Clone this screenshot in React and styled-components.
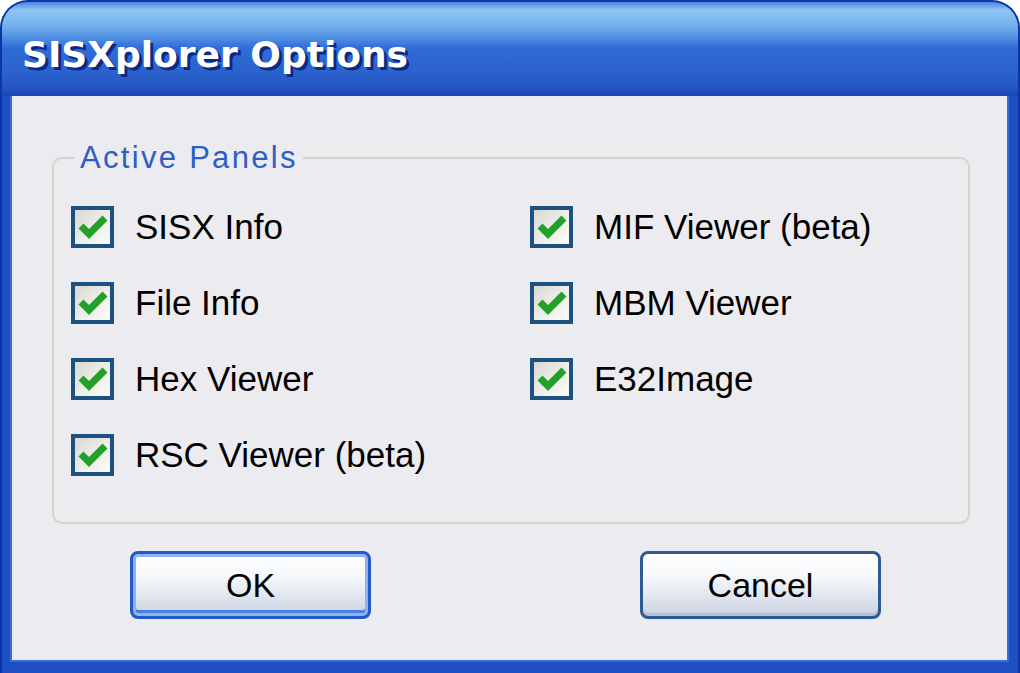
import React from "react";
import styled, { createGlobalStyle } from "styled-components";

const GlobalStyle = createGlobalStyle`
  html, body {
    margin: 0;
    padding: 0;
    background: #ffffff;
  }
  body {
    font-family: "Liberation Sans", Arial, sans-serif;
  }
`;

const panels = [
  { label: "SISX Info", checked: true },
  { label: "File Info", checked: true },
  { label: "Hex Viewer", checked: true },
  { label: "RSC Viewer (beta)", checked: true },
  { label: "MIF Viewer (beta)", checked: true },
  { label: "MBM Viewer", checked: true },
  { label: "E32Image", checked: true },
];

const Check = () => (
  <svg width="30" height="26" viewBox="0 0 30 26">
    <path
      d="M3 12 L11 20 L27 4"
      fill="none"
      stroke="#22a02a"
      strokeWidth="7"
      strokeLinejoin="miter"
      strokeLinecap="butt"
    />
  </svg>
);

export default function App() {
  return (
    <>
      <GlobalStyle />
      <Window>
        <TitleBar>
          <Title>SISXplorer Options</Title>
        </TitleBar>
        <Body>
          <GroupBox>
            <Legend>Active Panels</Legend>
            <CheckGrid>
              {panels.map((p) => (
                <CheckRow key={p.label}>
                  <Box>{p.checked && <Check />}</Box>
                  <Label>{p.label}</Label>
                </CheckRow>
              ))}
            </CheckGrid>
          </GroupBox>
          <Buttons>
            <Button $default>OK</Button>
            <Button>Cancel</Button>
          </Buttons>
        </Body>
      </Window>
    </>
  );
}

const Window = styled.div`
  width: 1020px;
  height: 673px;
  display: flex;
  flex-direction: column;
  background: #1f4fc4;
  border-radius: 28px 28px 0 0;
  overflow: hidden;
  box-sizing: border-box;
  border: 2px solid #0c35a8;
  border-bottom: none;
`;

const TitleBar = styled.div`
  height: 94px;
  flex: none;
  display: flex;
  align-items: center;
  padding-left: 20px;
  background: linear-gradient(
    #4a86e0 0px,
    #8fc5f3 8px,
    #78b4ee 22px,
    #4f8fe3 36px,
    #2f6bd6 46px,
    #2b62cd 70px,
    #2456c2 86px,
    #1c47ae 94px
  );
`;

const Title = styled.div`
  color: #ffffff;
  font-family: "DejaVu Sans", "Liberation Sans", sans-serif;
  font-weight: bold;
  font-size: 36px;
  letter-spacing: 0;
  text-shadow: 3px 3px 0 #0b2a82;
  margin-top: 10px;
`;

const Body = styled.div`
  flex: 1;
  background: #ecebef;
  margin: 0 9px 11px 8px;
  border: 2px solid #3a6fd6;
  border-top: none;
  display: flex;
  flex-direction: column;
  padding: 44px 0 0 40px;
  box-sizing: border-box;
`;

const GroupBox = styled.fieldset`
  margin: 0;
  width: 918px;
  box-sizing: border-box;
  height: 384px;
  border: 2px solid #d6d4ca;
  border-radius: 10px;
  padding: 30px 0 0 17px;
`;

const Legend = styled.legend`
  margin-left: 4px;
  padding: 0 5px 0 5px;
  color: #2c5fc6;
  font-size: 31px;
  letter-spacing: 2.3px;
  line-height: 36px;
`;

const CheckGrid = styled.div`
  display: grid;
  grid-template-rows: repeat(4, 42px);
  grid-template-columns: 459px auto;
  grid-auto-flow: column;
  row-gap: 34px;
`;

const CheckRow = styled.label`
  display: flex;
  align-items: center;
  gap: 21px;
`;

const Box = styled.span`
  width: 43px;
  height: 42px;
  box-sizing: border-box;
  border: 4px solid #1c5180;
  background: linear-gradient(135deg, #d9d9d2 0%, #eeeeea 55%, #fbfbfa 100%);
  display: flex;
  align-items: center;
  justify-content: center;
  flex: none;
`;

const Label = styled.span`
  color: #000000;
  font-size: 35px;
  line-height: 42px;
  white-space: nowrap;
`;

const Buttons = styled.div`
  display: flex;
  padding-left: 78px;
  gap: 269px;
  margin-top: 27px;
`;

const Button = styled.button`
  width: 241px;
  height: 68px;
  box-sizing: border-box;
  border: 3px solid ${(p) => (p.$default ? "#2159c6" : "#2b5a94")};
  border-radius: 8px;
  background: linear-gradient(
    #ffffff 0%,
    #f6f8fb 35%,
    #dfe5ee 70%,
    #c9d2e1 100%
  );
  box-shadow: ${(p) =>
    p.$default
      ? "inset 0 0 0 3px #8fb3ec, inset 0 -3px 0 3px #4b7fdc"
      : "inset 0 -3px 0 #b5c0d2"};
  color: #000000;
  font-family: "Liberation Sans", Arial, sans-serif;
  font-size: 34px;
  padding: 0;
`;
